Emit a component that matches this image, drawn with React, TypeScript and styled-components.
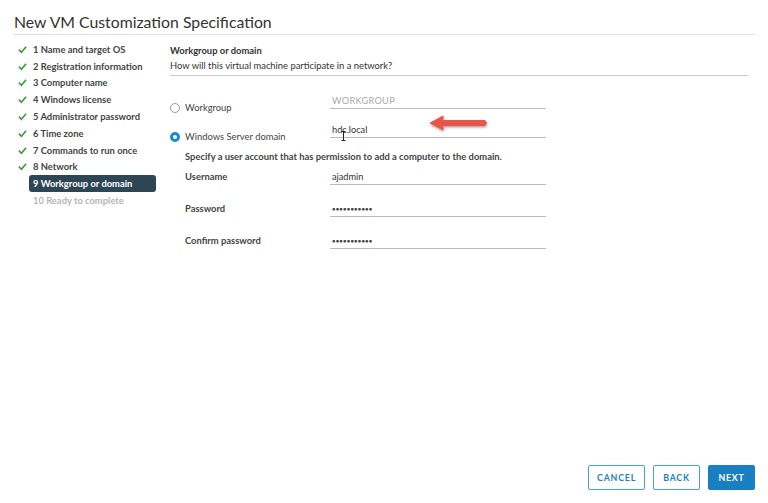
import styled, { createGlobalStyle } from 'styled-components';

const GlobalStyle = createGlobalStyle`
  html, body {
    margin: 0;
    padding: 0;
    background: #fff;
    font-family: Lato, "Open Sans", "Liberation Sans", sans-serif;
    color: #333;
  }
`;

const Page = styled.div`
  width: 768px;
  height: 503px;
  display: flex;
  flex-direction: column;
  box-sizing: border-box;
  padding: 12px 13px 13px 14px;
  position: relative;
`;

const Title = styled.h1`
  margin: 0;
  font-size: 15.8px;
  font-weight: 400;
  color: #333;
  padding-bottom: 3px;
  border-bottom: 1px solid #ddd;
  line-height: 19px;
`;

const Body = styled.div`
  display: flex;
  flex: 1;
  padding-top: 6px;
`;

const Nav = styled.ul`
  list-style: none;
  margin: 0;
  padding: 0;
  width: 142px;
  display: flex;
  flex-direction: column;
`;

const NavItem = styled.li<{ active?: boolean; disabled?: boolean }>`
  display: flex;
  align-items: center;
  height: 16.8px;
  font-size: 9.4px;
  font-weight: 700;
  color: ${(p) => (p.disabled ? '#b5b5b5' : p.active ? '#fff' : '#444')};
  background: ${(p) => (p.active ? '#2d4654' : 'transparent')};
  border-radius: 3px;
  margin-left: ${(p) => (p.active || p.disabled ? '15px' : '4px')};
  padding-left: ${(p) => (p.active || p.disabled ? '4px' : '0')};
  gap: 6px;
`;

const Check = styled.svg`
  width: 9px;
  height: 9px;
  flex: none;
`;

const Content = styled.div`
  padding: 4px 0 0 14px;
  display: flex;
  flex-direction: column;
  width: 578px;
`;

const SectionTitle = styled.div`
  font-size: 9.4px;
  font-weight: 700;
  color: #333;
  line-height: 12px;
`;

const SectionSub = styled.div`
  font-size: 9.4px;
  color: #333;
  line-height: 14px;
  padding-top: 2px;
  padding-bottom: 2px;
  border-bottom: 1px solid #ccc;
`;

const Row = styled.div<{ top: number }>`
  display: grid;
  grid-template-columns: 160px 216px;
  align-items: end;
  margin-top: ${(p) => p.top}px;
`;

const RadioLabel = styled.label`
  display: flex;
  align-items: center;
  gap: 5px;
  font-size: 9.4px;
  color: #444;
  transform: translateY(4px);
`;

const Radio = styled.span<{ checked?: boolean }>`
  width: 10px;
  height: 10px;
  border-radius: 50%;
  box-sizing: border-box;
  border: ${(p) => (p.checked ? '3.5px solid #1a8bd1' : '1px solid #999')};
  background: #fff;
  flex: none;
`;

const Field = styled.div<{ placeholder?: boolean }>`
  font-size: 9.2px;
  line-height: 13px;
  height: 13px;
  padding: 0 0 1px 2px;
  color: ${(p) => (p.placeholder ? '#a9a9a9' : '#333')};
  border-bottom: 1px solid #bbb;
  position: relative;
  letter-spacing: ${(p) => (p.placeholder ? '0.3px' : '0')};
`;

const Dots = styled.span`
  letter-spacing: 0.2px;
  font-size: 6px;
  font-weight: 700;
  color: #444;
  vertical-align: 1px;
`;

const Indented = styled.div`
  padding-left: 15px;
  display: flex;
  flex-direction: column;
`;

const Hint = styled.div`
  font-size: 9.4px;
  font-weight: 700;
  color: #444;
  margin-top: 13px;
`;

const FieldRow = styled.div<{ top: number }>`
  display: grid;
  grid-template-columns: 145px 216px;
  align-items: end;
  margin-top: ${(p) => p.top}px;
`;

const FieldLabel = styled.div`
  font-size: 9.4px;
  font-weight: 700;
  color: #444;
  padding-bottom: 3px;
`;

const Cursor = styled.svg`
  position: absolute;
  left: 11px;
  top: 8px;
  width: 5px;
  height: 10px;
`;

const Arrow = styled.svg`
  position: absolute;
  left: 428px;
  top: 114px;
  width: 62px;
  height: 20px;
`;

const Footer = styled.div`
  display: flex;
  justify-content: flex-end;
  gap: 8px;
`;

const Button = styled.button<{ primary?: boolean }>`
  height: 25px;
  padding: 0 8px;
  min-width: 47px;
  font-family: Lato, "Open Sans", sans-serif;
  font-size: 8.8px;
  font-weight: 700;
  letter-spacing: 0.8px;
  border-radius: 2px;
  border: 1px solid ${(p) => (p.primary ? '#1a7fc1' : '#4aa0d5')};
  background: ${(p) => (p.primary ? '#1a7fc1' : '#fff')};
  color: ${(p) => (p.primary ? '#fff' : '#1a7fc1')};
  cursor: pointer;
`;

const steps = [
  '1 Name and target OS',
  '2 Registration information',
  '3 Computer name',
  '4 Windows license',
  '5 Administrator password',
  '6 Time zone',
  '7 Commands to run once',
  '8 Network',
];

const CheckIcon = () => (
  <Check viewBox="0 0 10 10">
    <path d="M1 5.2 L3.8 8 L9 2" fill="none" stroke="#3c9a3c" strokeWidth="1.8" />
  </Check>
);

const App = () => {
  return (
    <>
      <GlobalStyle />
      <Page>
        <Title>New VM Customization Specification</Title>
        <Body>
          <Nav>
            {steps.map((s) => (
              <NavItem key={s}>
                <CheckIcon />
                {s}
              </NavItem>
            ))}
            <NavItem active>9 Workgroup or domain</NavItem>
            <NavItem disabled>10 Ready to complete</NavItem>
          </Nav>
          <Content>
            <SectionTitle>Workgroup or domain</SectionTitle>
            <SectionSub>How will this virtual machine participate in a network?</SectionSub>

            <Row top={18}>
              <RadioLabel>
                <Radio />
                Workgroup
              </RadioLabel>
              <Field placeholder>WORKGROUP</Field>
            </Row>

            <Row top={14}>
              <RadioLabel>
                <Radio checked />
                Windows Server domain
              </RadioLabel>
              <Field>
                hdc.local
                <Cursor viewBox="0 0 5 10">
                  <path d="M0.5 0.5 H4.5 M2.5 0.5 V9.5 M0.5 9.5 H4.5" stroke="#222" strokeWidth="1" fill="none" />
                </Cursor>
              </Field>
            </Row>

            <Indented>
              <Hint>Specify a user account that has permission to add a computer to the domain.</Hint>
              <FieldRow top={8}>
                <FieldLabel>Username</FieldLabel>
                <Field>ajadmin</Field>
              </FieldRow>
              <FieldRow top={17}>
                <FieldLabel>Password</FieldLabel>
                <Field><Dots>•••••••••••</Dots></Field>
              </FieldRow>
              <FieldRow top={17}>
                <FieldLabel>Confirm password</FieldLabel>
                <Field><Dots>•••••••••••</Dots></Field>
              </FieldRow>
            </Indented>
          </Content>
        </Body>
        <Footer>
          <Button>CANCEL</Button>
          <Button>BACK</Button>
          <Button primary>NEXT</Button>
        </Footer>
        <Arrow viewBox="0 0 62 20">
          <defs>
            <filter id="sh" x="-10%" y="-30%" width="130%" height="180%">
              <feDropShadow dx="0.5" dy="1.5" stdDeviation="1" floodColor="#000" floodOpacity="0.35" />
            </filter>
          </defs>
          <path
            d="M2 9 L15 2 L15 6.5 L57 6.5 Q60 9 57 11.5 L15 11.5 L15 16 Z"
            fill="#e8564a"
            stroke="#e8564a"
            strokeWidth="1"
            strokeLinejoin="round"
            filter="url(#sh)"
          />
        </Arrow>
      </Page>
    </>
  );
};

export default App;
